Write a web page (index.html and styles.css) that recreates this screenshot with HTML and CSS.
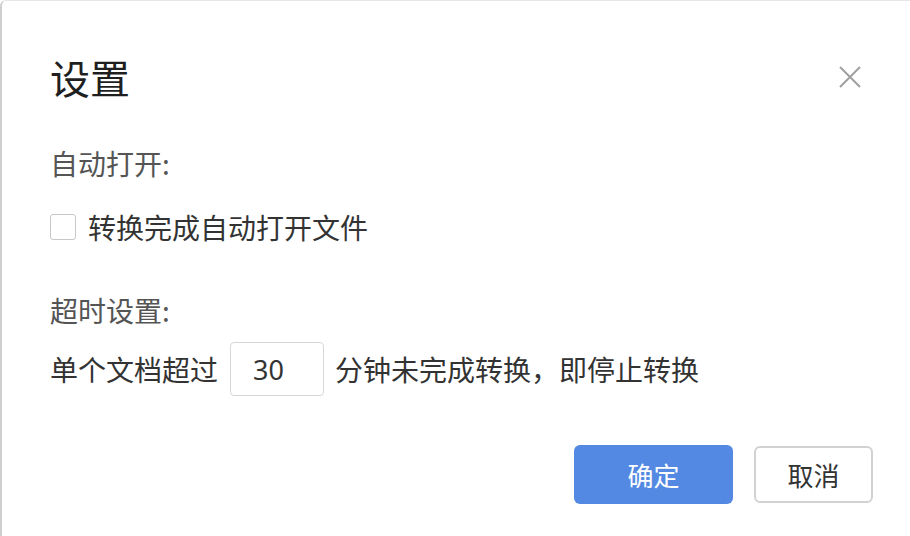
FILE: index.html
```html
<!DOCTYPE html>
<html lang="zh-CN">
<head>
    <meta charset="UTF-8">
    <meta name="viewport" content="width=device-width, initial-scale=1.0">
    <title>设置</title>
    <link rel="stylesheet" href="styles.css">
</head>
<body>
    <div class="dialog">
        <div class="dialog-header">
            <h1>设置</h1>
            <button class="close-btn" aria-label="关闭">
                <svg width="22" height="22" viewBox="0 0 22 22">
                    <path d="M1 1 L21 21 M21 1 L1 21" stroke="#a0a0a0" stroke-width="2" fill="none"/>
                </svg>
            </button>
        </div>

        <div class="section-label first">自动打开:</div>
        <label class="check-row">
            <span class="checkbox"></span>
            <span>转换完成自动打开文件</span>
        </label>

        <div class="section-label second">超时设置:</div>
        <div class="timeout-row">
            <span>单个文档超过</span>
            <input type="text" class="minutes" value="30">
            <span>分钟未完成转换，即停止转换</span>
        </div>

        <div class="dialog-footer">
            <button class="btn btn-primary">确定</button>
            <button class="btn btn-default">取消</button>
        </div>
    </div>
</body>
</html>
```

FILE: styles.css
```css
body {
    margin: 0;
    font-family: "Noto Sans CJK SC", "Noto Sans", sans-serif;
    background-color: #fff;
    color: #333;
    overflow: hidden;
}

.dialog {
    box-sizing: border-box;
    height: 536px;
    padding: 56px 37px 0 48px;
    background: #fff;
    border-top: 1px solid #e6e6e6;
    border-left: 2px solid #cfcfcf;
    border-top-left-radius: 6px;
}

.dialog-header {
    display: flex;
    justify-content: space-between;
    align-items: center;
    height: 40px;
}

.dialog-header h1 {
    margin: 0;
    font-size: 40px;
    line-height: 1;
    font-weight: normal;
    color: #1f1f1f;
}

.close-btn {
    border: none;
    background: none;
    padding: 0;
    margin-right: 12px;
    width: 22px;
    height: 22px;
    cursor: pointer;
}

.section-label {
    font-size: 28px;
    line-height: 28px;
    color: #555;
}

.section-label.first {
    margin-top: 52px;
}

.section-label.second {
    margin-top: 55px;
}

.check-row {
    display: flex;
    align-items: center;
    gap: 12px;
    margin-top: 36px;
    font-size: 28px;
    line-height: 28px;
    color: #333;
}

.checkbox {
    width: 24px;
    height: 24px;
    border: 1px solid #c8c8c8;
    border-radius: 3px;
    background: #fff;
}

.timeout-row {
    display: flex;
    align-items: center;
    margin-top: 18px;
    height: 54px;
    font-size: 28px;
    line-height: 28px;
    color: #333;
}

.minutes {
    box-sizing: border-box;
    width: 94px;
    height: 54px;
    margin: 0 11px 0 12px;
    padding: 0 0 0 22px;
    border: 1px solid #d6d6d6;
    border-radius: 4px;
    font-family: "Noto Sans", sans-serif;
    font-size: 27px;
    color: #333;
    outline: none;
}

.dialog-footer {
    display: flex;
    justify-content: flex-end;
    gap: 21px;
    margin-top: 49px;
}

.btn {
    height: 59px;
    border-radius: 6px;
    font-family: "Noto Sans CJK SC", sans-serif;
    font-size: 26px;
    cursor: pointer;
}

.btn-primary {
    width: 159px;
    border: none;
    background-color: #5389e2;
    color: #fff;
}

.btn-default {
    width: 119px;
    height: 57px;
    margin-top: 1px;
    border: 2px solid #d2d2d2;
    background-color: #fff;
    color: #333;
}
```
